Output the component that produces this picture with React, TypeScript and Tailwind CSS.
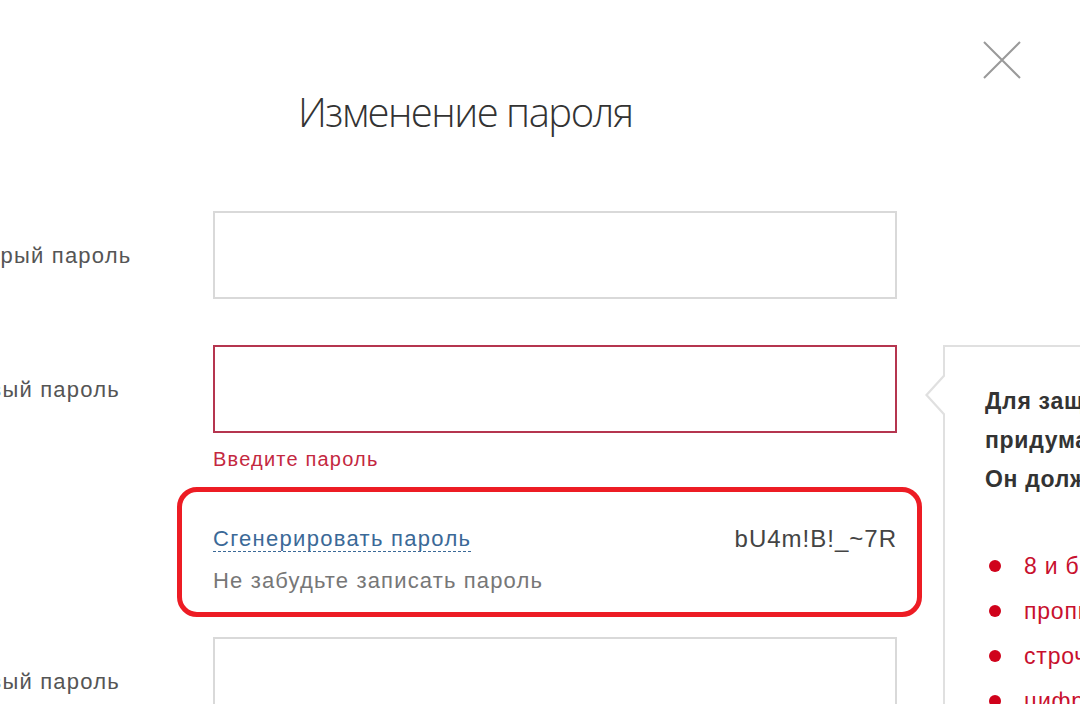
import React from "react";

const Label = ({ children }: { children: React.ReactNode }) => (
  <div className="w-[254px] shrink-0 text-[22px] tracking-[1.2px] text-[#555] whitespace-nowrap">{children}</div>
);

const Field = ({ error }: { error?: boolean }) => (
  <div
    className={
      error
        ? "w-[684px] h-[88px] border-2 border-[#b5354f] bg-white"
        : "w-[684px] h-[88px] border-2 border-[#d9d9d9] bg-white"
    }
  />
);

const rules = ["8 и более символов", "прописные латинские буквы", "строчные латинские буквы", "цифры"];

export default function App() {
  return (
    <div
      className="relative w-[1080px] h-[704px] overflow-hidden bg-white"
      style={{ fontFamily: '"Liberation Sans", Arial, sans-serif' }}
    >
      <button className="absolute left-[982px] top-[40px] w-[40px] h-[40px]">
        <svg width="40" height="40" viewBox="0 0 40 40">
          <path d="M2 2 L38 38 M38 2 L2 38" stroke="#9a9a9a" strokeWidth="2" fill="none" />
        </svg>
      </button>

      <h1
        className="pl-[298px] pt-[86px] text-[40px] leading-[52px] font-light text-[#333] tracking-[-1.5px]"
        style={{ fontFamily: '"Open Sans", sans-serif' }}
      >
        Изменение пароля
      </h1>

      <div className="flex items-start mt-[73px] -ml-[41px]">
        <div className="flex flex-col shrink-0">
          <div className="flex items-center">
            <Label>Старый пароль</Label>
            <Field />
          </div>

          <div className="flex items-center mt-[46px]">
            <Label>Новый пароль</Label>
            <Field error />
          </div>
          <div className="pl-[254px]">
            <div className="mt-[16px] text-[20px] leading-[20px] tracking-[1.2px] text-[#c4283f]">Введите пароль</div>
            <div className="mt-[57px] flex justify-between items-center">
              <span className="text-[22px] leading-[25px] tracking-[1.3px] text-[#3b6997] border-b border-dashed border-[#3b6997]">
                Сгенерировать пароль
              </span>
              <span className="text-[24px] leading-[26px] tracking-[1px] text-[#444]">bU4m!B!_~7R</span>
            </div>
            <div className="mt-[16px] text-[22px] leading-[25px] tracking-[1.15px] text-[#777]">Не забудьте записать пароль</div>
          </div>

          <div className="flex items-center mt-[44px]">
            <Label>Новый пароль</Label>
            <Field />
          </div>
        </div>

        <div className="relative ml-[46px] mt-[134px] w-[560px] h-[400px] border-2 border-[#e0e0e0] shrink-0">
          <div className="absolute -left-[20px] top-[26px] w-0 h-0 border-y-[22px] border-y-transparent border-r-[20px] border-r-[#e0e0e0]" />
          <div className="absolute -left-[17px] top-[26px] w-0 h-0 border-y-[22px] border-y-transparent border-r-[20px] border-r-white" />
          <div className="pl-[40px] pt-[35px] text-[23px] leading-[39px] font-bold tracking-[0.7px] text-[#333] whitespace-nowrap">
            <div>Для защиты аккаунта</div>
            <div>придумайте надёжный пароль.</div>
            <div>Он должен содержать:</div>
          </div>
          <ul className="mt-[55px] pl-[44px] flex flex-col gap-[21px]">
            {rules.map((r) => (
              <li key={r} className="flex items-center text-[23px] leading-[24px] tracking-[0.8px] text-[#c8102e] whitespace-nowrap">
                <span className="w-[12px] h-[12px] shrink-0 rounded-full bg-[#d0021b] mr-[23px]" />
                {r}
              </li>
            ))}
          </ul>
        </div>
      </div>

      <div className="absolute left-[177px] top-[487px] w-[745px] h-[130px] border-[5px] border-[#ed1c24] rounded-[20px]" />
    </div>
  );
}
